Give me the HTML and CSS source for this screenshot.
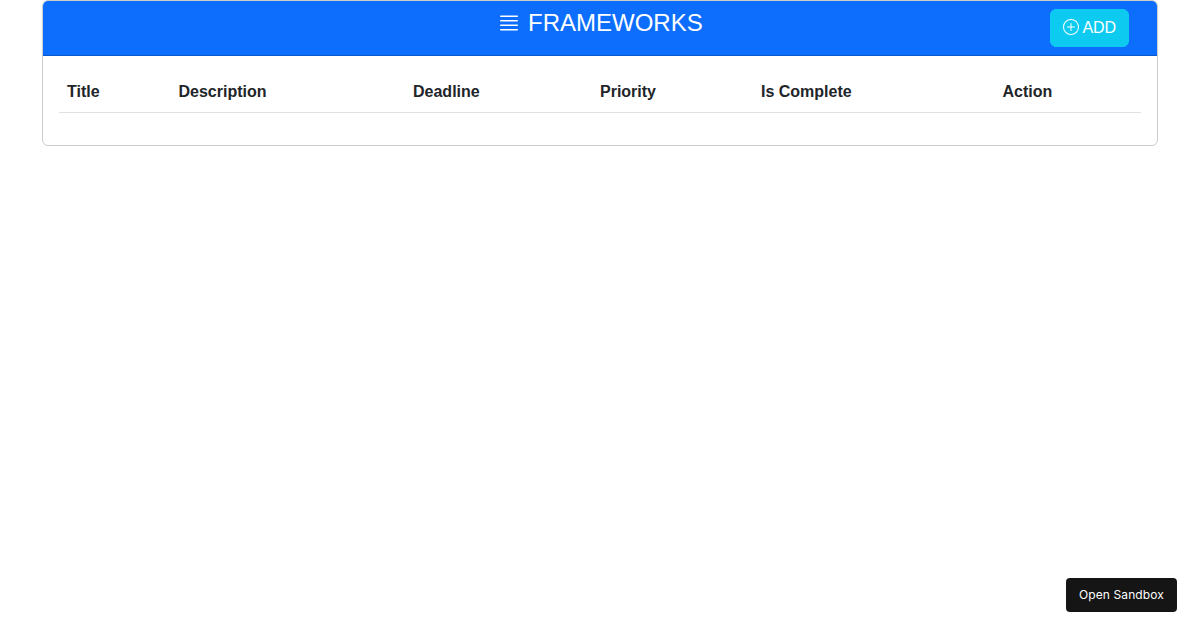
FILE: index.html
```html
<!DOCTYPE html>
<html>
<head>
    <title>Frameworks</title>
    <link rel="stylesheet" href="styles.css">
</head>
<body>
    <div class="container">
        <div class="card">
            <div class="card-header">
                <div></div>
                <h3 class="card-title">
                    <svg class="title-icon" viewBox="0 0 16 16" fill="currentColor">
                        <path fill-rule="evenodd" d="M2 12.5a.5.5 0 0 1 .5-.5h11a.5.5 0 0 1 0 1h-11a.5.5 0 0 1-.5-.5zm0-3a.5.5 0 0 1 .5-.5h11a.5.5 0 0 1 0 1h-11a.5.5 0 0 1-.5-.5zm0-3a.5.5 0 0 1 .5-.5h11a.5.5 0 0 1 0 1h-11a.5.5 0 0 1-.5-.5zm0-3a.5.5 0 0 1 .5-.5h11a.5.5 0 0 1 0 1h-11a.5.5 0 0 1-.5-.5z"/>
                    </svg>
                    FRAMEWORKS
                </h3>
                <div class="header-actions">
                    <button class="add-button">
                        <svg class="add-icon" viewBox="0 0 16 16" fill="currentColor">
                            <path d="M8 15A7 7 0 1 1 8 1a7 7 0 0 1 0 14zm0 1A8 8 0 1 0 8 0a8 8 0 0 0 0 16z"/>
                            <path d="M8 4a.5.5 0 0 1 .5.5v3h3a.5.5 0 0 1 0 1h-3v3a.5.5 0 0 1-1 0v-3h-3a.5.5 0 0 1 0-1h3v-3A.5.5 0 0 1 8 4z"/>
                        </svg>
                        ADD
                    </button>
                </div>
            </div>
            <div class="card-body">
                <table class="table">
                    <colgroup>
                        <col class="col-title">
                        <col class="col-description">
                        <col class="col-deadline">
                        <col class="col-priority">
                        <col class="col-complete">
                        <col class="col-action">
                    </colgroup>
                    <thead>
                        <tr>
                            <th>Title</th>
                            <th>Description</th>
                            <th>Deadline</th>
                            <th>Priority</th>
                            <th>Is Complete</th>
                            <th>Action</th>
                        </tr>
                    </thead>
                    <tbody></tbody>
                </table>
            </div>
        </div>
    </div>

    <a class="sandbox-button">Open Sandbox</a>
</body>
</html>
```

FILE: styles.css
```css
* {
    box-sizing: border-box;
}

body {
    margin: 0;
    background: #fff;
    color: #212529;
    font-family: "Liberation Sans", Arial, sans-serif;
    font-size: 16px;
    line-height: 1.5;
}

.container {
    width: 1140px;
    margin: 0 auto;
    padding: 0 12px;
}

.card {
    border: 1px solid rgba(0, 0, 0, 0.2);
    border-radius: 6px;
    overflow: hidden;
}

.card-header {
    display: grid;
    grid-template-columns: 1fr auto 1fr;
    height: 55px;
    padding: 4px 28px 0;
    background: #0d6efd;
    border-bottom: 1px solid rgba(0, 0, 0, 0.2);
    color: #fff;
}

.card-title {
    margin: 0;
    font-size: 24px;
    font-weight: 400;
    line-height: 36px;
    white-space: nowrap;
}

.title-icon {
    width: 24px;
    height: 24px;
    vertical-align: -4px;
}

.header-actions {
    display: flex;
    justify-content: flex-end;
    padding-top: 4px;
}

.add-button {
    width: 79px;
    height: 38px;
    padding: 0;
    background: #0dcaf0;
    border: 1px solid #0dcaf0;
    border-radius: 6px;
    color: #fff;
    font-family: inherit;
    font-size: 16px;
    white-space: nowrap;
}

.add-icon {
    width: 16px;
    height: 16px;
    vertical-align: -2px;
}

.card-body {
    padding: 16px;
    height: 89px;
}

.table {
    width: 100%;
    border-collapse: collapse;
    table-layout: fixed;
}

.table th {
    padding: 8px;
    text-align: left;
    font-weight: 700;
    border-bottom: 1px solid #dee2e6;
}

.col-title {
    width: 111.5px;
}

.col-description {
    width: 234.5px;
}

.col-deadline {
    width: 187px;
}

.col-priority {
    width: 161px;
}

.col-complete {
    width: 241.5px;
}

.sandbox-button {
    position: fixed;
    right: 23px;
    bottom: 18px;
    width: 111px;
    height: 34px;
    background: #151515;
    border-radius: 4px;
    color: #fff;
    font-family: Inter, Roboto, sans-serif;
    font-size: 12px;
    letter-spacing: 0.1px;
    line-height: 34px;
    text-align: center;
}
```
